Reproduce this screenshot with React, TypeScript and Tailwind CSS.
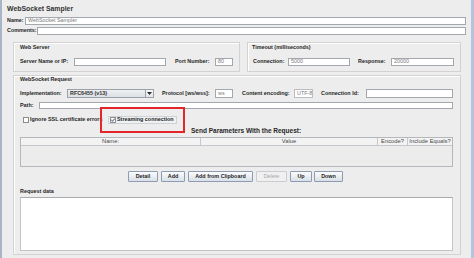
import React from "react";

const Label = ({ w, children, className = "" }: { w: string; children: React.ReactNode; className?: string }) => (
  <div className={`shrink-0 whitespace-nowrap font-bold text-[#262626] ${w} ${className}`}>{children}</div>
);

const Field = ({ w, value = "", className = "" }: { w: string; value?: string; className?: string }) => (
  <div
    className={`h-full shrink-0 bg-white border border-[#a3a8ae] flex items-center pl-[2px] text-[#7a7a7a] whitespace-nowrap overflow-hidden ${w} ${className}`}
  >
    {value}
  </div>
);

const Btn = ({ w, children, disabled = false }: { w: string; children: React.ReactNode; disabled?: boolean }) => (
  <div
    className={`h-full shrink-0 flex items-center justify-center rounded-[1px] border ${
      disabled
        ? "border-[#c9cdd2] bg-[#f0f0f0] text-[#a8a8a8] font-normal"
        : "border-[#8e9bb0] bg-gradient-to-b from-[#fbfcfd] to-[#d9e0e8] text-[#1e1e1e] font-bold"
    } ${w}`}
  >
    {children}
  </div>
);

const CheckBox = ({ checked = false }: { checked?: boolean }) => (
  <div className="w-[6px] h-[6px] shrink-0 bg-white border border-[#8d8d8d] flex items-center justify-center">
    {checked && (
      <svg width="4" height="4" viewBox="0 0 4 4" className="shrink-0">
        <path d="M0.3 2 L1.5 3.2 L3.7 0.6" stroke="#1c3b6e" strokeWidth="1" fill="none" />
      </svg>
    )}
  </div>
);

export default function App() {
  return (
    <div className="relative w-[474px] h-[258px] overflow-hidden bg-[#ededed] flex font-['Liberation_Sans',Arial,sans-serif] text-[5.4px] leading-none">
      <div className="w-[2px] h-full bg-[#a9b4c6] shrink-0" />
      <div className="flex-1 flex flex-col px-[5px] pt-[2px]">
        {/* title */}
        <div className="h-[14px] flex items-center font-bold text-[6.9px] text-[#333333]">WebSocket Sampler</div>
        {/* name */}
        <div className="mt-[1px] h-[8px] flex items-center">
          <Label w="w-[18px]">Name:</Label>
          <Field w="flex-1" value="WebSocket Sampler" />
        </div>
        <div className="mt-[2px] h-[8px] flex items-center">
          <Label w="w-[30px]">Comments:</Label>
          <Field w="flex-1" />
        </div>

        <div className="ml-[6px] mr-[5px] flex-1 flex flex-col">
          {/* top panels */}
          <div className="mt-[7px] h-[30px] flex gap-[7px]">
            <div className="w-[227px] h-full border border-[#d2d2d2] shadow-[inset_1px_1px_0_#ffffff] flex flex-col pl-[6px]">
              <div className="mt-[2px] h-[6px] flex items-center font-bold text-[#262626]">Web Server</div>
              <div className="mt-[7px] h-[8px] flex items-center">
                <Label w="w-[54px]">Server Name or IP:</Label>
                <Field w="w-[92px]" />
                <Label w="w-[40px]" className="ml-[9px]">Port Number:</Label>
                <Field w="w-[18px]" value="80" />
              </div>
            </div>
            <div className="flex-1 h-full border border-[#d2d2d2] shadow-[inset_1px_1px_0_#ffffff] flex flex-col pl-[4px]">
              <div className="mt-[2px] h-[6px] flex items-center font-bold text-[#262626]">Timeout (milliseconds)</div>
              <div className="mt-[7px] h-[8px] flex items-center pl-[1px]">
                <Label w="w-[35px]">Connection:</Label>
                <Field w="w-[62px]" value="5000" />
                <Label w="w-[33px]" className="ml-[8px]">Response:</Label>
                <Field w="w-[63px]" value="20000" />
              </div>
            </div>
          </div>

          {/* websocket request */}
          <div className="mt-[3px] mb-[3px] flex-1 border border-[#d2d2d2] shadow-[inset_1px_1px_0_#ffffff] flex flex-col pl-[6px] pr-[7px]">
            <div className="mt-[1px] h-[6px] flex items-center font-bold text-[#262626]">WebSocket Request</div>
            <div className="mt-[6px] h-[9px] flex items-center">
              <Label w="w-[47px]">Implementation:</Label>
              <div className="w-[87px] h-full shrink-0 border border-[#9aa1aa] bg-gradient-to-b from-[#eef0f2] to-[#dcdfe3] flex">
                <div className="flex-1 flex items-center pl-[2px] font-bold text-[#303030]">RFC6455 (v13)</div>
                <div className="w-[8px] h-full border-l border-[#9aa1aa] bg-gradient-to-b from-[#fafafa] to-[#e2e4e7] flex items-center justify-center">
                  <svg width="5" height="3" viewBox="0 0 5 3">
                    <path d="M0 0 L5 0 L2.5 3 Z" fill="#2a2a2a" />
                  </svg>
                </div>
              </div>
              <Label w="w-[53px]" className="ml-[8px]">Protocol [ws/wss]:</Label>
              <Field w="w-[18px]" value="ws" className="h-[8px]" />
              <Label w="w-[52px]" className="ml-[9px]">Content encoding:</Label>
              <Field w="w-[19px]" value="UTF-8" className="h-[8px] border-[#b9bdc2]" />
              <Label w="w-[45px]" className="ml-[8px]">Connection Id:</Label>
              <Field w="flex-1" className="h-[8px]" />
            </div>
            <div className="mt-[4px] h-[7px] flex items-center">
              <Label w="w-[19px]">Path:</Label>
              <Field w="flex-1" />
            </div>
            <div className="mt-[7px] h-[8px] flex items-center">
              <div className="w-[88px] shrink-0 flex items-center pl-[3px] gap-[1px]">
                <CheckBox />
                <span className="font-bold text-[#262626] whitespace-nowrap">Ignore SSL certificate errors</span>
              </div>
              <div className="h-full flex items-center pl-[1px] pr-[2px] gap-[1px] border border-[#cfd3d8] bg-[#f0f1f3]">
                <CheckBox checked />
                <span className="font-bold text-[#262626] whitespace-nowrap">Streaming connection</span>
              </div>
            </div>
            <div className="mt-[4px] h-[6px] flex items-center pl-[171px] font-bold text-[6.5px] text-[#262626] whitespace-nowrap">
              Send Parameters With the Request:
            </div>
            <div className="mt-[3px] h-[30px] border border-[#b4b8bd] bg-[#ececec] flex flex-col">
              <div className="h-[8px] flex bg-[#f3f3f3] border-b border-[#c4c7cb] text-[#4a4a4a] text-[5.8px]">
                <div className="w-[180px] flex items-center justify-center border-r border-[#c4c7cb]">Name:</div>
                <div className="w-[177px] flex items-center justify-center border-r border-[#c4c7cb]">Value</div>
                <div className="w-[30px] flex items-center justify-center border-r border-[#c4c7cb]">Encode?</div>
                <div className="flex-1 flex items-center justify-center">Include Equals?</div>
              </div>
            </div>
            <div className="mt-[4px] h-[11px] flex pl-[108px]">
              <Btn w="w-[30px]">Detail</Btn>
              <div className="w-[3px]" />
              <Btn w="w-[24px]">Add</Btn>
              <div className="w-[3px]" />
              <Btn w="w-[65px]">Add from Clipboard</Btn>
              <div className="w-[3px]" />
              <Btn w="w-[31px]" disabled>Delete</Btn>
              <div className="w-[3px]" />
              <Btn w="w-[22px]">Up</Btn>
              <div className="w-[2px]" />
              <Btn w="w-[29px]">Down</Btn>
            </div>
            <div className="mt-[7px] h-[6px] flex items-center font-bold text-[#262626]">Request data</div>
            <div className="mt-[2px] h-[54px] bg-white border border-[#c2c5c9] border-t-[#a8abb0]" />
          </div>
        </div>
      </div>
      <div className="w-[3px] h-full bg-[#b5c3dc] shrink-0" />

      {/* annotation overlay */}
      <div className="absolute left-[100px] top-[107px] w-[85px] h-[26px] border-2 border-[#e3262b] pointer-events-none" />
    </div>
  );
}
